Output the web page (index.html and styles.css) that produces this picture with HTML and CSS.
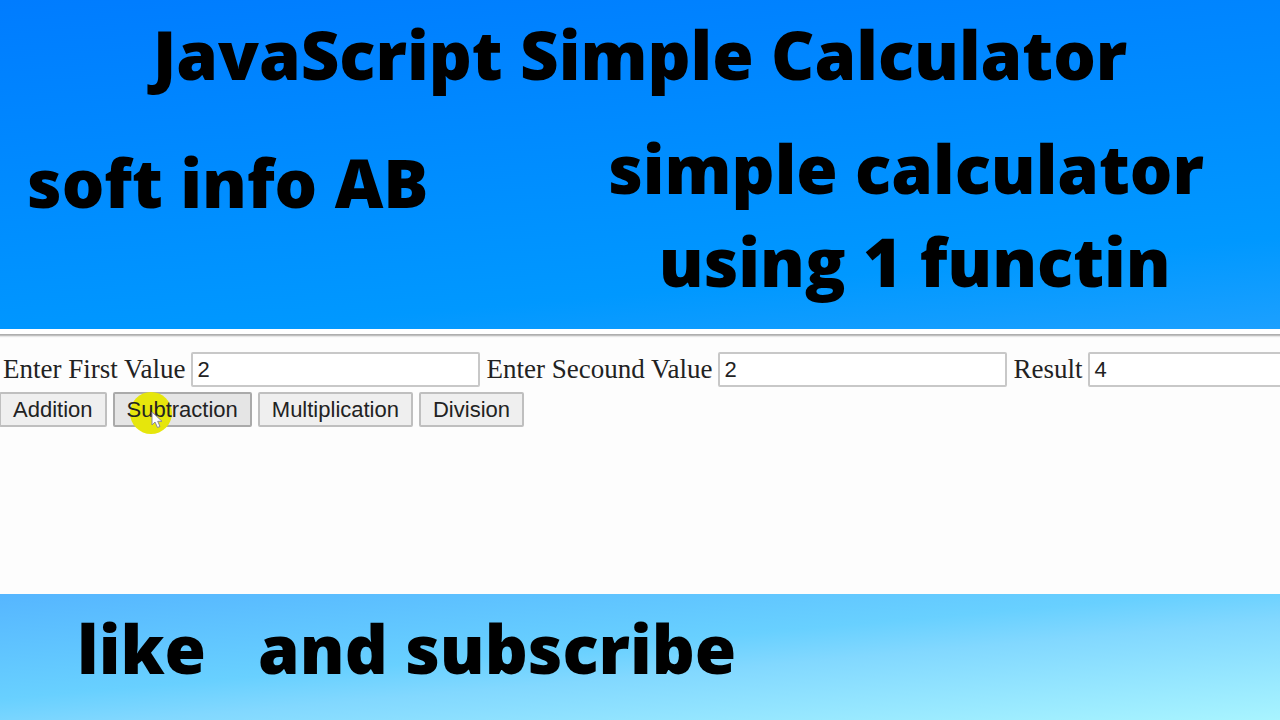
FILE: index.html
```html
<!DOCTYPE html>
<html lang="en">
<head>
    <meta charset="utf-8">
    <title>JavaScript Simple Calculator</title>
    <link rel="stylesheet" href="styles.css">
</head>
<body>
<header class="banner">
    <h1>JavaScript Simple Calculator</h1>
    <div class="banner-row">
        <p class="channel">soft info AB</p>
        <p class="subtitle">simple calculator<br>&nbsp;using 1 functin</p>
    </div>
</header>

<main class="calculator">
    <div class="fields">
        <label for="first">Enter First Value</label>
        <input type="text" id="first" value="2">
        <label for="second">Enter Secound Value</label>
        <input type="text" id="second" value="2">
        <label for="result">Result</label>
        <input type="text" id="result" value="4">
    </div>
    <div class="buttons">
        <button type="button" onclick="calculate('+')">Addition</button>
        <button type="button" class="active" onclick="calculate('-')">
            <span class="spot"></span>
            <span class="button-text">Subtraction</span>
            <svg class="cursor" viewBox="0 0 12 18" width="12" height="18">
                <path d="M1 1 L1 14 L4 11 L6.500 16.500 L9 15.500 L6.700 10.300 L11 10.300 Z" fill="#fff" stroke="#889" stroke-width="1"/>
            </svg>
        </button>
        <button type="button" onclick="calculate('*')">Multiplication</button>
        <button type="button" onclick="calculate('/')">Division</button>
    </div>
</main>

<footer class="footer">
    <p><span>like</span> <span>and subscribe</span></p>
</footer>

<script>
    function calculate(op) {
        var a = Number(document.getElementById('first').value);
        var b = Number(document.getElementById('second').value);
        var result = document.getElementById('result');

        if (op === '+') {
            result.value = a + b;
        } else if (op === '-') {
            result.value = a - b;
        } else if (op === '*') {
            result.value = a * b;
        } else {
            result.value = a / b;
        }
    }
</script>
</body>
</html>
```
FILE: styles.css
```css
* {
    box-sizing: border-box;
}

body {
    margin: 0;
    min-height: 100vh;
    display: flex;
    flex-direction: column;
    overflow-x: hidden;
    background: linear-gradient(175deg, #007cff 0%, #0098ff 42%, #1ca0ff 53%, #55b5ff 71%, #68d0ff 84%, #82d8ff 88%, #a8f4ff 100%);
    color: #000;
}

h1,
p {
    margin: 0;
    font-family: "Open Sans", sans-serif;
    font-size: 67px;
    font-weight: 800;
    line-height: 93px;
    white-space: nowrap;
}

/* top banner */
.banner {
    padding: 8px 0 21px;
}

h1 {
    text-align: center;
}

.banner-row {
    display: flex;
    justify-content: space-between;
    padding: 21px 76px 0 27px;
}

.channel {
    padding-top: 14px;
}

.subtitle {
    text-align: center;
}

/* calculator */
.calculator {
    flex: 1;
    padding-top: 18px;
    background: #fdfdfd;
    border-top: 5px solid #fff;
    box-shadow: inset 0 4px 2px -2px #aaa;
    overflow: hidden;
}

.fields,
.buttons {
    display: flex;
    align-items: center;
    gap: 6px;
}

.fields {
    padding-left: 3px;
    font-family: "Liberation Serif", serif;
    font-size: 27px;
    line-height: 35px;
    color: #222;
    white-space: nowrap;
}

input {
    flex: none;
    width: 289px;
    height: 35px;
    padding: 0 4px;
    border: 2px solid #c8c8c8;
    border-radius: 2px;
    background: #fff;
    color: #222;
    font-family: "Liberation Sans", sans-serif;
    font-size: 22px;
}

.buttons {
    margin: 5px 0 0 -1px;
}

button {
    position: relative;
    height: 35px;
    padding: 0 12px;
    border: 2px solid #bfbfbf;
    border-radius: 2px;
    background: #efefef;
    color: #222;
    font-family: "Liberation Sans", sans-serif;
    font-size: 22px;
}

button.active {
    border-color: #aaa;
    background: #e5e5e5;
}

.button-text {
    position: relative;
}

/* mouse pointer with its highlight */
.spot {
    position: absolute;
    top: -2px;
    left: 15px;
    width: 42px;
    height: 42px;
    border-radius: 50%;
    background: #e6e60c;
}

.cursor {
    position: absolute;
    top: 17px;
    left: 36px;
}

/* bottom banner */
.footer {
    padding: 8px 77px 25px;
}

.footer p {
    display: flex;
    gap: 52px;
}
```
